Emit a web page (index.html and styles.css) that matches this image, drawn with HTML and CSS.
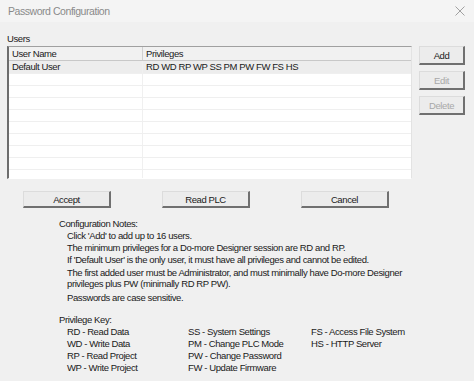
FILE: index.html
```html
<!DOCTYPE html>
<html>
<head>
<meta charset="utf-8">
<link rel="stylesheet" href="styles.css">
</head>
<body>
<div class="window">
  <div class="titlebar">
    <span class="title">Password Configuration</span>
    <svg class="close" width="10" height="10" viewBox="0 0 10 10"><path d="M0.5 0.5 L9.5 9.5 M9.5 0.5 L0.5 9.5" stroke="#a0a0a0" stroke-width="1" fill="none"/></svg>
  </div>
  <div class="group-label">Users</div>
  <div class="main">
    <div class="listbox">
      <div class="list-head">
        <div class="col c1">User Name</div>
        <div class="col c2">Privileges</div>
      </div>
      <div class="list-body">
        <div class="row sel"><div class="col c1">Default User</div><div class="col c2">RD WD RP WP SS PM PW FW FS HS</div></div>
        <div class="row"><div class="col c1"></div><div class="col c2"></div></div>
        <div class="row"><div class="col c1"></div><div class="col c2"></div></div>
        <div class="row"><div class="col c1"></div><div class="col c2"></div></div>
        <div class="row"><div class="col c1"></div><div class="col c2"></div></div>
        <div class="row"><div class="col c1"></div><div class="col c2"></div></div>
        <div class="row"><div class="col c1"></div><div class="col c2"></div></div>
        <div class="row"><div class="col c1"></div><div class="col c2"></div></div>
        <div class="row"><div class="col c1"></div><div class="col c2"></div></div>
        <div class="row"><div class="col c1"></div><div class="col c2"></div></div>
        <div class="row"><div class="col c1"></div><div class="col c2"></div></div>
      </div>
    </div>
    <div class="side">
      <button class="btn small">Add</button>
      <button class="btn small disabled">Edit</button>
      <button class="btn small disabled">Delete</button>
    </div>
  </div>
  <div class="actions">
    <button class="btn wide">Accept</button>
    <button class="btn wide">Read PLC</button>
    <button class="btn wide">Cancel</button>
  </div>
  <div class="notes">
    <div class="heading">Configuration Notes:</div>
    <div class="note">Click 'Add' to add up to 16 users.</div>
    <div class="note">The minimum privileges for a Do-more Designer session are RD and RP.</div>
    <div class="note">If 'Default User' is the only user, it must have all privileges and cannot be edited.</div>
    <div class="note two">The first added user must be Administrator, and must minimally have Do-more Designer<br>privileges plus PW (minimally RD RP PW).</div>
    <div class="note">Passwords are case sensitive.</div>
  </div>
  <div class="key">
    <div class="heading">Privilege Key:</div>
    <div class="key-grid">
      <div>RD - Read Data</div><div>SS - System Settings</div><div>FS - Access File System</div>
      <div>WD - Write Data</div><div>PM - Change PLC Mode</div><div>HS - HTTP Server</div>
      <div>RP - Read Project</div><div>PW - Change Password</div><div></div>
      <div>WP - Write Project</div><div>FW - Update Firmware</div><div></div>
    </div>
  </div>
</div>
</body>
</html>
```
FILE: styles.css
```css
html, body {
  margin: 0;
  padding: 0;
  background: #f0f0f0;
}
body {
  width: 474px;
  height: 381px;
  overflow: hidden;
  font-family: "Liberation Sans", Arial, sans-serif;
  font-size: 9.5px;
  letter-spacing: -0.4px;
  color: #1a1a1a;
}
.window {
  width: 474px;
  height: 381px;
  box-sizing: border-box;
  background: #f0f0f0;
}
.titlebar {
  height: 22px;
  display: flex;
  align-items: center;
  justify-content: space-between;
  padding: 0 9px 0 8px;
  background: #f4f4f4;
}
.title {
  color: #8a8a8a;
  font-size: 10.5px;
  letter-spacing: -0.45px;
}
.close {
  display: block;
}
.group-label {
  margin: 11px 0 0 7px;
  height: 12px;
  line-height: 12px;
}
.main {
  display: flex;
  align-items: flex-start;
  margin-top: 1px;
}
.listbox {
  margin-left: 7px;
  width: 405px;
  height: 133px;
  box-sizing: border-box;
  border-top: 1px solid #a0a0a0;
  border-left: 2px solid #6d6d6d;
  border-right: 1px solid #e3e3e3;
  border-bottom: 1px solid #ffffff;
  background: #ffffff;
  overflow: hidden;
}
.list-head {
  display: flex;
  height: 13px;
  background: #f1f1f1;
  border-bottom: 1px solid #c8c8c8;
}
.list-head .col {
  line-height: 13px;
}
.list-head .c1 {
  border-right: 1px solid #d0d0d0;
}
.col {
  box-sizing: border-box;
  white-space: nowrap;
  padding-left: 3px;
}
.c1 {
  width: 134px;
}
.c2 {
  flex: 1;
}
.row {
  display: flex;
  height: 11px;
  line-height: 11px;
  border-bottom: 1px solid #efefef;
}
.row .c1 {
  border-right: 1px solid #f0f0f0;
}
.row.sel {
  height: 12px;
  line-height: 12px;
  background: #ededed;
}
.side {
  display: flex;
  flex-direction: column;
  gap: 6px;
  margin-left: 7px;
}
.btn {
  font-family: "Liberation Sans", Arial, sans-serif;
  font-size: 9.5px;
  letter-spacing: -0.4px;
  color: #1a1a1a;
  background: #ececec;
  box-sizing: border-box;
  height: 19px;
  padding: 0;
  border-top: 1px solid #dcdcdc;
  border-left: 1px solid #dcdcdc;
  border-right: 2px solid #707070;
  border-bottom: 2px solid #707070;
  border-radius: 0;
}
.btn.small {
  width: 46px;
}
.btn.disabled {
  color: #a8a8a8;
}
.actions {
  display: flex;
  gap: 51px;
  margin: 12px 0 0 23px;
}
.btn.wide {
  width: 88px;
  height: 17px;
}
.notes {
  margin: 10px 0 0 59px;
}
.heading {
  height: 12px;
  line-height: 12px;
}
.note {
  margin-left: 8px;
  line-height: 12px;
}
.note.two {
  line-height: 11px;
  margin-top: 1px;
}
.note:last-child {
  margin-top: 3px;
}
.key {
  margin: 10px 0 0 59px;
}
.key-grid {
  display: grid;
  grid-template-columns: 121px 123px auto;
  margin-left: 8px;
  line-height: 12px;
}
```
